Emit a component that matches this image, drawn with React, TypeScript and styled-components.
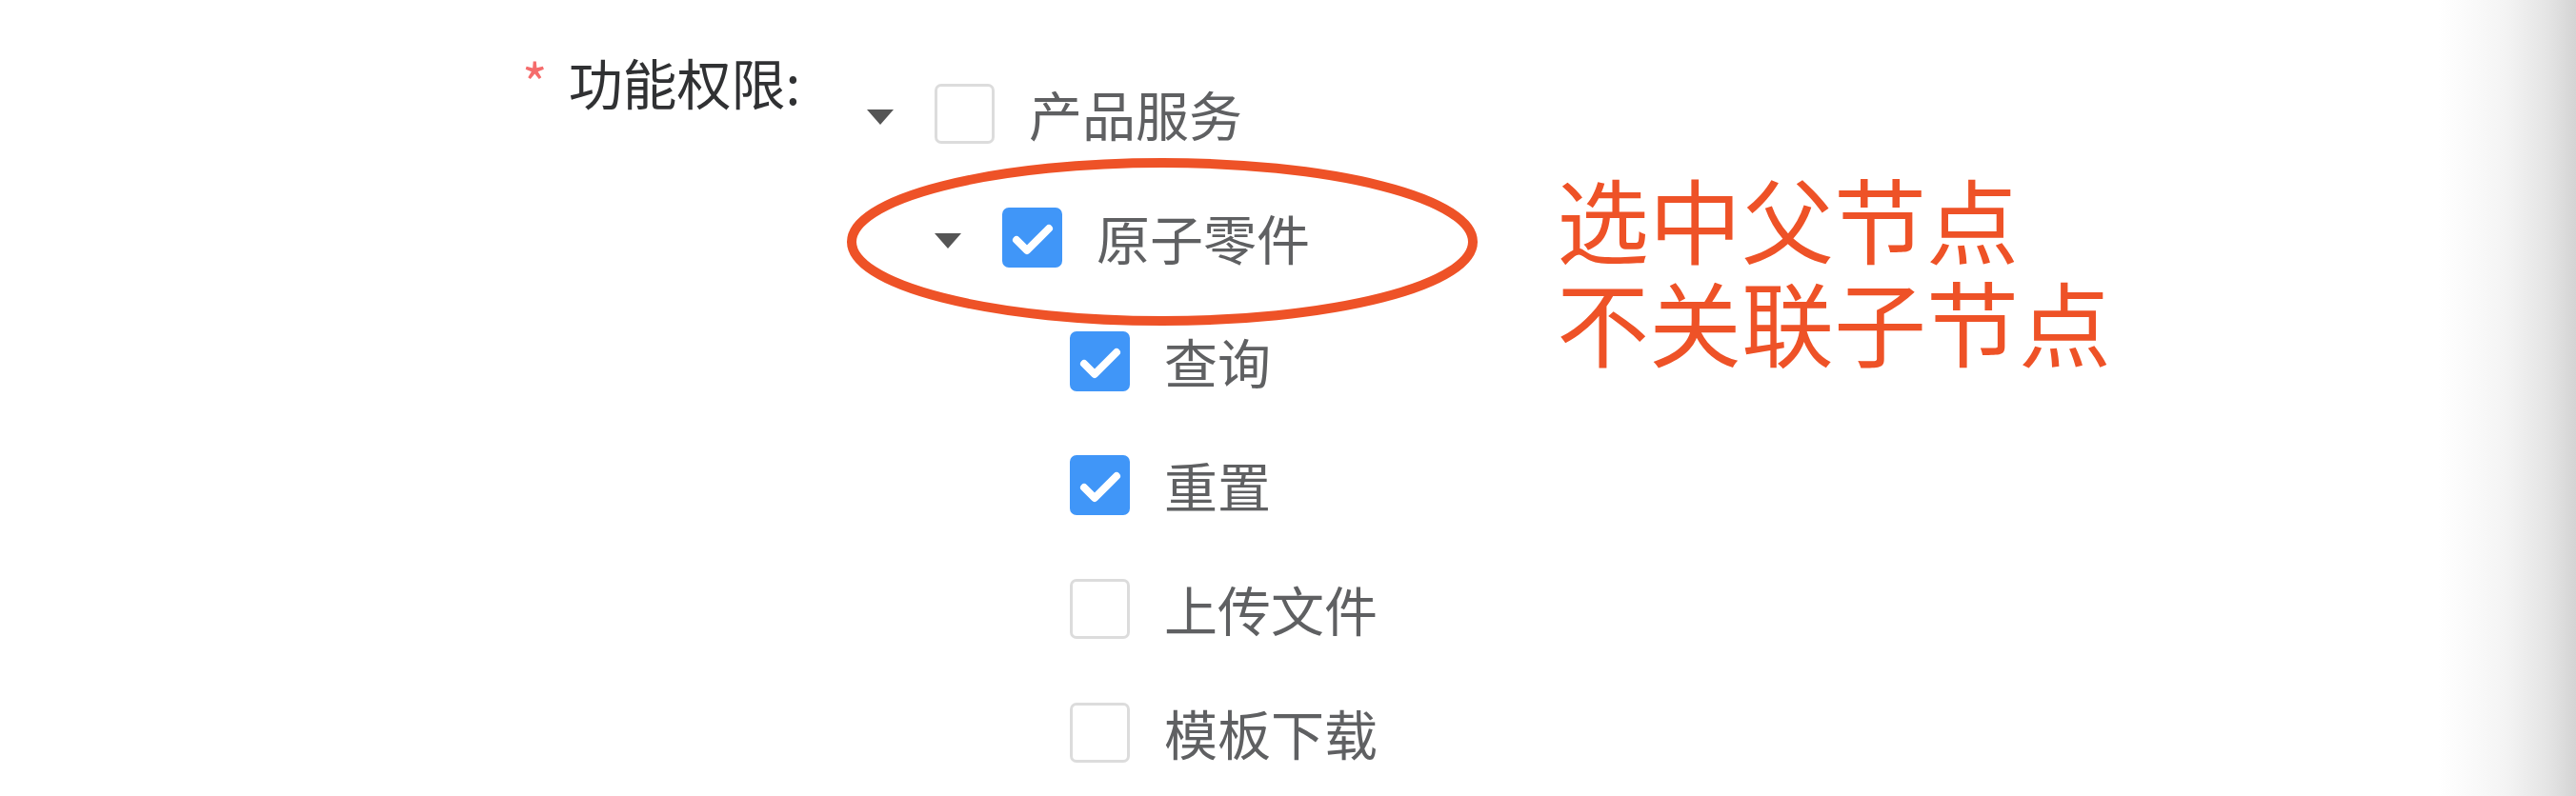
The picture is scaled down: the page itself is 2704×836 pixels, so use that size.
import React from "react";
import styled, { createGlobalStyle } from "styled-components";

const GlobalStyle = createGlobalStyle`
  html, body {
    margin: 0;
    padding: 0;
    background: #ffffff;
  }
  * {
    box-sizing: border-box;
  }
`;

const Page = styled.div`
  width: 2704px;
  height: 836px;
  overflow: hidden;
  display: flex;
  align-items: flex-start;
  font-family: "Noto Sans CJK SC", "Noto Sans", sans-serif;
  /* window shadow on the right edge */
  background: linear-gradient(
    to right,
    #ffffff 0,
    #ffffff 2560px,
    #f4f4f4 2630px,
    #e4e4e4 2675px,
    #d4d4d4 2704px
  );
`;

const FormLabel = styled.label`
  width: 900px;
  padding-left: 548px;
  margin-top: 53px;
  display: flex;
  align-items: center;
  font-size: 57px;
  line-height: 64px;
  color: #303133;
`;

const Required = styled.span`
  color: #f56c6c;
  margin-right: 22px;
`;

const TreeBox = styled.div`
  position: relative;
  width: 734px;
  margin-top: 54px;
  display: flex;
  flex-direction: column;
`;

const Row = styled.div<{ $level: number }>`
  height: 130px;
  display: flex;
  align-items: center;
  padding-left: ${(p) => p.$level * 71}px;
`;

const Caret = styled.span`
  width: 81px;
  flex: none;
  display: flex;
  align-items: center;
  padding-left: 10px;
  margin-top: 8px;
`;

const Box = styled.span<{ $checked: boolean }>`
  width: 63px;
  height: 63px;
  flex: none;
  border-radius: 7px;
  border: 3px solid ${(p) => (p.$checked ? "#4096f8" : "#dcdcdc")};
  background: ${(p) => (p.$checked ? "#4096f8" : "#ffffff")};
  display: flex;
  align-items: center;
  justify-content: center;
`;

const NodeLabel = styled.span`
  margin-left: 36px;
  font-size: 56px;
  line-height: 1;
  color: #5f6062;
  white-space: nowrap;
`;

const Ring = styled.svg`
  position: absolute;
  left: -12px;
  top: 111px;
  pointer-events: none;
`;

const Note = styled.div`
  margin-top: 174px;
  font-size: 97px;
  line-height: 108px;
  color: #ee5227;
  white-space: nowrap;
`;

type Node = { label: string; checked: boolean; children?: Node[] };

const tree: Node[] = [
  {
    label: "产品服务",
    checked: false,
    children: [
      {
        label: "原子零件",
        checked: true,
        children: [
          { label: "查询", checked: true },
          { label: "重置", checked: true },
          { label: "上传文件", checked: false },
          { label: "模板下载", checked: false },
        ],
      },
    ],
  },
];

function flatten(nodes: Node[], level = 0): { node: Node; level: number }[] {
  return nodes.flatMap((node) => [
    { node, level },
    ...(node.children ? flatten(node.children, level + 1) : []),
  ]);
}

function CheckMark() {
  return (
    <svg width="57" height="57" viewBox="0 0 57 57">
      <path
        d="M12 31 L23 42 L46 19"
        fill="none"
        stroke="#ffffff"
        strokeWidth="8"
        strokeLinecap="round"
        strokeLinejoin="round"
      />
    </svg>
  );
}

export default function App() {
  const rows = flatten(tree);

  return (
    <>
      <GlobalStyle />
      <Page>
        <FormLabel>
          <Required>*</Required>
          功能权限:
        </FormLabel>
        <TreeBox>
          {rows.map(({ node, level }) => (
            <Row key={node.label} $level={level}>
              <Caret>
                {node.children && (
                  <svg width="28" height="16" viewBox="0 0 28 16">
                    <polygon points="0,0 28,0 14,16" fill="#555555" />
                  </svg>
                )}
              </Caret>
              <Box $checked={node.checked}>{node.checked && <CheckMark />}</Box>
              <NodeLabel>{node.label}</NodeLabel>
            </Row>
          ))}
          <Ring width="664" height="178" viewBox="0 0 664 178">
            <ellipse
              cx="332"
              cy="89"
              rx="326"
              ry="83"
              fill="none"
              stroke="#ee5227"
              strokeWidth="10"
            />
          </Ring>
        </TreeBox>
        <Note>
          选中父节点
          <br />
          不关联子节点
        </Note>
      </Page>
    </>
  );
}
